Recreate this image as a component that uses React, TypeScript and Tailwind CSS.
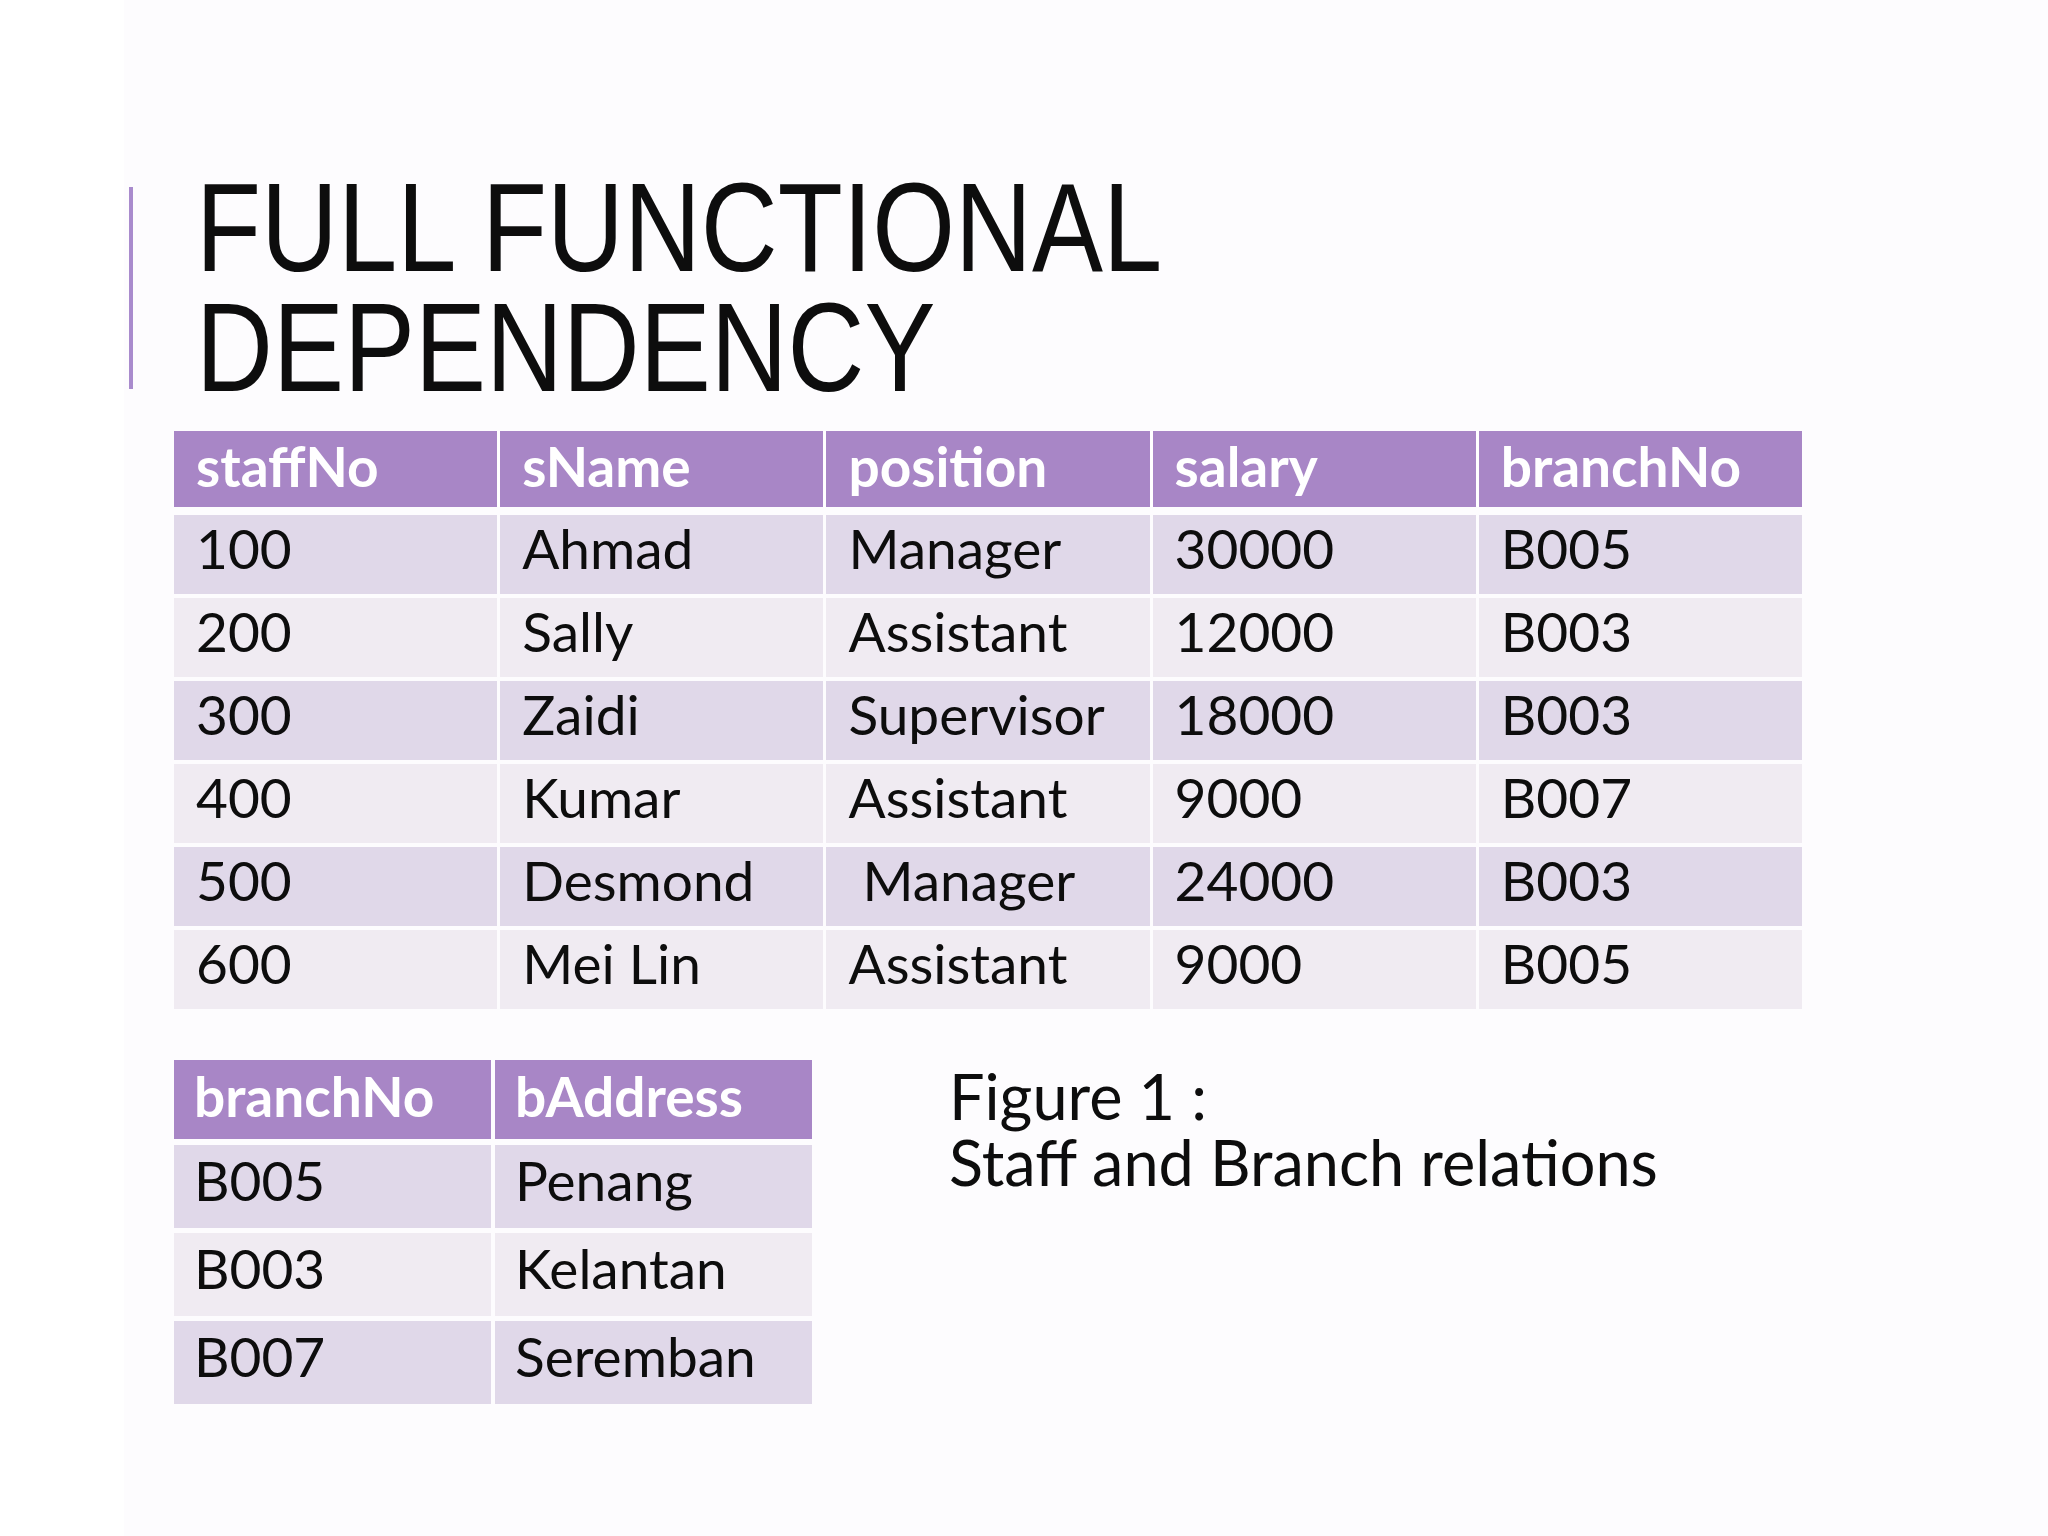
import React from 'react';

const staffCols = ['staffNo', 'sName', 'position', 'salary', 'branchNo'];

const staffRows = [
  ['100', 'Ahmad', 'Manager', '30000', 'B005'],
  ['200', 'Sally', 'Assistant', '12000', 'B003'],
  ['300', 'Zaidi', 'Supervisor', '18000', 'B003'],
  ['400', 'Kumar', 'Assistant', '9000', 'B007'],
  ['500', 'Desmond', ' Manager', '24000', 'B003'],
  ['600', 'Mei Lin', 'Assistant', '9000', 'B005'],
];

const branchRows = [
  ['B005', 'Penang'],
  ['B003', 'Kelantan'],
  ['B007', 'Seremban'],
];

const body = { fontFamily: 'Lato, "Open Sans", sans-serif' };

export default function App() {
  return (
    <div className="w-[2048px] h-[1536px] bg-white flex overflow-hidden">
      <div className="w-[124px] shrink-0 bg-white" />
      <div className="flex-1 bg-[#fdfcfe] flex flex-col" style={body}>
        {/* Title */}
        <div className="flex items-start pt-[168px]">
          <div className="ml-[5px] mt-[19px] w-[4px] h-[202px] bg-[#a98bcd]" />
          <h1
            className="ml-[63px] text-[126px] leading-[120px] text-[#0d0d0d] uppercase origin-left scale-x-[0.845]"
            style={{ fontFamily: '"Liberation Sans", Arial, sans-serif' }}
          >
            Full Functional
            <br />
            Dependency
          </h1>
        </div>

        {/* Staff table */}
        <div className="ml-[50px] mt-[23px] w-[1628px]">
          <div className="grid grid-cols-5 gap-x-[3px] h-[76px] bg-white">
            {staffCols.map((c) => (
              <div key={c} className="bg-[#a886c6] text-white font-bold text-[55px] leading-[66px] pl-[22px] pt-[2px]">
                {c}
              </div>
            ))}
          </div>
          <div className="flex flex-col gap-[4px] mt-[8px]">
            {staffRows.map((r, i) => (
              <div key={i} className="grid grid-cols-5 gap-x-[3px] h-[79px]">
                {r.map((v, j) => (
                  <div
                    key={j}
                    className={`${i % 2 === 0 ? 'bg-[#e0d8e9]' : 'bg-[#f0ebf2]'} text-[#0d0d0d] text-[55px] leading-[66px] pl-[22px] pt-[0px] whitespace-pre`}
                  >
                    {v}
                  </div>
                ))}
              </div>
            ))}
          </div>
        </div>

        {/* Branch table + caption */}
        <div className="flex items-start ml-[50px] mt-[51px]">
          <div className="w-[638px]">
            <div className="grid grid-cols-2 gap-x-[4px] h-[79px]">
              {['branchNo', 'bAddress'].map((c) => (
                <div key={c} className="bg-[#a886c6] text-white font-bold text-[55px] leading-[66px] pl-[20px] pt-[3px]">
                  {c}
                </div>
              ))}
            </div>
            <div className="flex flex-col gap-[5px] mt-[6px]">
              {branchRows.map((r, i) => (
                <div key={i} className="grid grid-cols-2 gap-x-[4px] h-[83px]">
                  {r.map((v, j) => (
                    <div
                      key={j}
                      className={`${i % 2 === 0 ? 'bg-[#e0d8e9]' : 'bg-[#f0ebf2]'} text-[#0d0d0d] text-[55px] leading-[66px] pl-[20px] pt-[2px]`}
                    >
                      {v}
                    </div>
                  ))}
                </div>
              ))}
            </div>
          </div>
          <div className="ml-[137px] mt-[3px] text-[63px] leading-[66px] text-[#0d0d0d] whitespace-pre">
            {'Figure 1 :'}
            <br />
            Staff and Branch relations
          </div>
        </div>
      </div>
    </div>
  );
}
